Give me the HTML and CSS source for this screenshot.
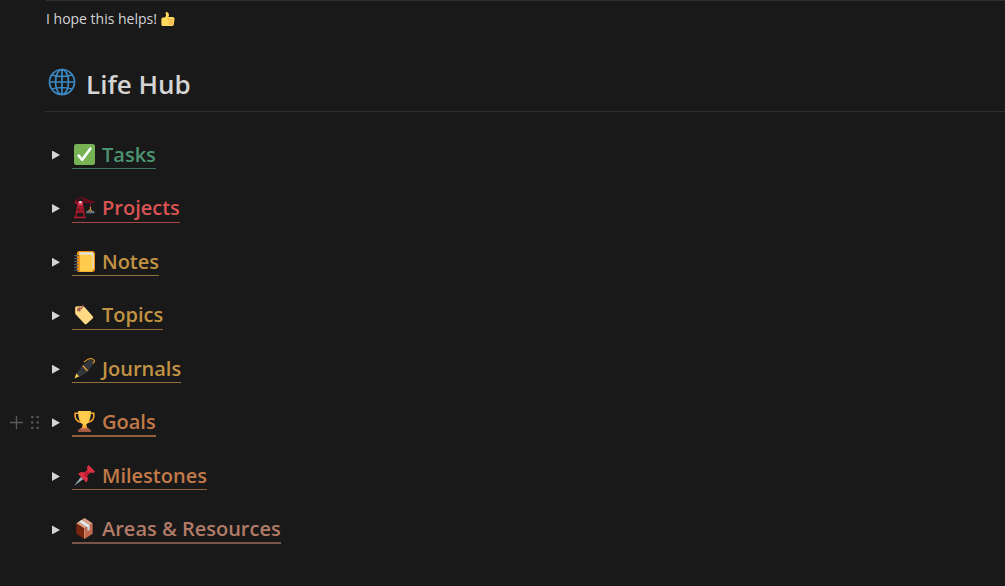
FILE: index.html
```html
<!DOCTYPE html>
<html lang="en">
<head>
<meta charset="utf-8">
<meta name="viewport" content="width=device-width, initial-scale=1">
<title>Life Hub</title>
<link rel="stylesheet" href="styles.css">
</head>
<body>
<main class="page">
  <p class="intro">I hope this helps!
    <svg class="thumb" viewBox="0 0 36 36" aria-label="thumbs up"><path fill="#ffdb5e" d="M10 15 13 9 12 1Q15-2 19 3 22 8 19 13H31Q35 14 35 18L33 32Q32 36 28 36H10Z"/><rect x="1" y="14" width="16" height="22" rx="4" fill="#ffdb5e"/><path fill="none" stroke="#ee9547" stroke-width="2" d="M20 14Q17 16 19 19M20 20H34M20 26H33M21 31H32"/></svg>
  </p>
  <h1 class="title">
    <svg class="globe" viewBox="0 0 28 28" aria-hidden="true"><g fill="none" stroke="#3b88c3" stroke-width="1.7"><circle cx="14" cy="14" r="12.5"/><ellipse cx="14" cy="14" rx="6.5" ry="12.5"/><path d="M14 1.5v25M1.5 14h25M4 7Q14 10 24 7M4 21Q14 18 24 21"/></g></svg>
    <span>Life Hub</span>
  </h1>
  <ul class="list">
    <li class="row">
      <span class="gutter"></span>
      <button class="toggle" aria-label="Expand Tasks"></button>
      <a class="link green" href="#tasks"><svg class="icon" viewBox="0 0 36 36" aria-hidden="true"><rect width="36" height="36" rx="4" fill="#77b255"/><path d="M8 20 14 27 28 8" fill="none" stroke="#fff" stroke-width="4.5" stroke-linecap="round" stroke-linejoin="round"/></svg><span>Tasks</span></a>
    </li>
    <li class="row">
      <span class="gutter"></span>
      <button class="toggle" aria-label="Expand Projects"></button>
      <a class="link red" href="#projects"><svg class="icon" viewBox="0 0 36 36" aria-hidden="true"><path d="M3 34 7 11H14L18 34M6 18H15L5 26H17M7 18 17 26" fill="none" stroke="#be1931" stroke-width="2"/><path d="M1 8 11 0 34 9M4 9H34M15 2 18 8 23 5 26 9" fill="none" stroke="#a0041e" stroke-width="1.4"/><path d="M0 35H20" stroke="#be1931" stroke-width="2.5"/><path d="M1 7H6V12H1Z" fill="#8b1528"/><rect x="7" y="7" width="8" height="9" fill="#dd2e44"/><rect x="9" y="7" width="4" height="4" fill="#ccd6dd"/><path d="M28 10V18" stroke="#be1931"/><path d="M28 17V21L25 24H31L28 21" fill="none" stroke="#ffac33" stroke-width="1.6"/><rect x="21" y="24" width="14" height="4" fill="#66757f"/></svg><span>Projects</span></a>
    </li>
    <li class="row">
      <span class="gutter"></span>
      <button class="toggle" aria-label="Expand Notes"></button>
      <a class="link yellow" href="#notes"><svg class="icon" viewBox="0 0 36 36" aria-hidden="true"><path d="M9 0H31Q36 0 36 5V31Q36 36 31 36H9Q5 36 5 32V4Q5 0 9 0Z" fill="#f4900c"/><path d="M9 2H31Q34 3 34 7V31H8Z" fill="#e1e8ed"/><path d="M9 6H29Q32 6 32 10V35H9Q6 35 6 31V9Q6 6 9 6Z" fill="#ffcc4d"/><path d="M5 7H10V35H8Q5 35 5 32Z" fill="#f4900c"/><path d="M1 8H7M1 13H7M1 18H7M1 23H7M1 28H7M1 33H7" stroke="#50606b" stroke-width="2" stroke-linecap="round"/></svg><span>Notes</span></a>
    </li>
    <li class="row">
      <span class="gutter"></span>
      <button class="toggle" aria-label="Expand Topics"></button>
      <a class="link yellow" href="#topics"><svg class="icon" viewBox="0 0 36 36" aria-hidden="true"><path d="M2 7Q2 4 5 4L15 4Q17 4 18 5L32 21Q34 23 32 25L22 34Q20 36 18 34L3 18Q2 17 2 15Z" fill="#ffd983"/><circle cx="9" cy="10" r="3.5" fill="#d99e82"/><circle cx="9" cy="10" r="1.5" fill="#664038"/><path d="M8 11Q5 13 7 7 10 6 13 8L16 1" fill="none" stroke="#a85048" stroke-width="1.8"/></svg><span>Topics</span></a>
    </li>
    <li class="row">
      <span class="gutter"></span>
      <button class="toggle" aria-label="Expand Journals"></button>
      <a class="link yellow" href="#journals"><svg class="icon" viewBox="0 0 36 36" aria-hidden="true"><path d="M1 35 4 26 10 31Z" fill="#ffcc4d"/><path d="M4 27 13 14 26 3Q31 0 34 3T32 12L23 24 10 32Z" fill="#31373d"/><path d="M15 13 23 22" stroke="#ffac33" stroke-width="2.2"/><path d="M17 7 24 2Q31-1 34 3T32 9" fill="none" stroke="#f4a018" stroke-width="1.8"/></svg><span>Journals</span></a>
    </li>
    <li class="row">
      <span class="gutter">
        <button class="tool" aria-label="Add block"><svg class="plus" viewBox="0 0 12 12" aria-hidden="true"><path d="M6 0V12M0 6H12" stroke="#5a5a5a" stroke-width="1.2"/></svg></button>
        <button class="tool" aria-label="Drag block"><svg class="grip" viewBox="0 0 8 12" aria-hidden="true"><g fill="#5a5a5a"><rect width="2" height="2"/><rect x="5" width="2" height="2"/><rect y="5" width="2" height="2"/><rect x="5" y="5" width="2" height="2"/><rect y="10" width="2" height="2"/><rect x="5" y="10" width="2" height="2"/></g></svg></button>
      </span>
      <button class="toggle" aria-label="Expand Goals"></button>
      <a class="link orange thick" href="#goals"><svg class="icon" viewBox="0 0 36 36" aria-hidden="true"><path d="M8 4H2Q0 18 14 20M28 4H34Q36 18 22 20" fill="none" stroke="#ffac33" stroke-width="2.6"/><path d="M7 0H29Q29 18 21 23V28H15V23Q7 18 7 0Z" fill="#ffcc4d"/><path d="M15 24H21L23 30H13Z" fill="#ffac33"/><path d="M12 29H24Q27 30 28 33H8Q9 30 12 29Z" fill="#c1694f"/><rect x="7" y="32" width="22" height="4" rx="1" fill="#a0583f"/></svg><span>Goals</span></a>
    </li>
    <li class="row">
      <span class="gutter"></span>
      <button class="toggle" aria-label="Expand Milestones"></button>
      <a class="link orange" href="#milestones"><svg class="icon" viewBox="0 0 36 36" aria-hidden="true"><path d="M0 36 12 20 16 24Z" fill="#99aab5"/><path d="M7 15Q12 10 18 13L23 8Q21 3 25 0L36 11Q33 15 28 13L22 19Q26 24 21 30Z" fill="#dd2e44"/><path d="M17 17 23 10 27 13 20 20Z" fill="#be1931"/></svg><span>Milestones</span></a>
    </li>
    <li class="row">
      <span class="gutter"></span>
      <button class="toggle" aria-label="Expand Areas &amp; Resources"></button>
      <a class="link brown thick" href="#areas"><svg class="icon" viewBox="0 0 36 36" aria-hidden="true"><path d="M4 9 18 18V36L4 27Z" fill="#77250f"/><path d="M18 18 32 9V27L18 36Z" fill="#c1694f"/><path d="M18 0 32 9 18 18 4 9Z" fill="#d99e82"/><path d="M13 4 27 13V21L23 22V16L9 6Z" fill="#ccd6dd"/><path d="M13 4 27 13 23 16 9 6Z" fill="#e1e8ed"/><path d="M18 18V35" stroke="#e3a080" stroke-width="1.3"/></svg><span>Areas &amp; Resources</span></a>
    </li>
  </ul>
</main>
</body>
</html>
```
FILE: styles.css
```css
* {
  box-sizing: border-box;
}

body {
  margin: 0;
  background: #191919;
  color: #d4d4d4;
  font-family: "Open Sans", "Noto Sans", sans-serif;
}

.page {
  display: flex;
  flex-direction: column;
  min-height: 100vh;
  padding-bottom: 42px;
}

.intro {
  display: flex;
  align-items: center;
  gap: 4px;
  margin: 0 0 0 46px;
  border-top: 1px solid #2f2f2f;
  font-size: 14px;
  line-height: 36px;
}

.thumb {
  width: 14px;
  height: 14px;
}

.title {
  display: flex;
  align-items: center;
  gap: 10px;
  margin: 24px 0 29px 45px;
  padding: 0 0 4px 3px;
  border-bottom: 1px solid #2f2f2f;
  font-size: 26px;
  font-weight: 600;
  line-height: 46px;
}

.globe {
  width: 28px;
  height: 28px;
  margin-bottom: 4px;
}

.list {
  display: flex;
  flex: 1;
  flex-direction: column;
  justify-content: space-between;
  margin: 0;
  padding: 0;
  list-style: none;
}

.row {
  display: flex;
  align-items: center;
}

.gutter {
  display: flex;
  align-items: center;
  gap: 8px;
  width: 52px;
  padding-left: 10px;
}

.tool,
.toggle {
  display: flex;
  padding: 0;
  border: 0;
  background: none;
  cursor: pointer;
}

.plus {
  width: 13px;
  height: 13px;
}

.grip {
  width: 9px;
  height: 13px;
}

.toggle {
  width: 8px;
  height: 9px;
  margin-right: 12px;
  background: #d4d4d4;
  clip-path: polygon(0 0, 100% 50%, 0 100%);
}

.link {
  display: flex;
  align-items: center;
  gap: 7px;
  height: 28px;
  padding: 0 0 1px 2px;
  border-bottom: 1px solid;
  font-size: 20px;
  font-weight: 600;
  text-decoration: none;
}

.icon {
  width: 21px;
  height: 21px;
  overflow: visible;
}

.green {
  color: #4b9570;
  border-color: #3b7458;
}

.red {
  color: #d95353;
  border-color: #a94545;
}

.yellow {
  color: #c29343;
  border-color: #93703a;
}

.orange {
  color: #c17a48;
  border-color: #935f3c;
}

.brown {
  color: #b17b68;
  border-color: #795548;
}

.thick {
  border-bottom-width: 2px;
}
```
